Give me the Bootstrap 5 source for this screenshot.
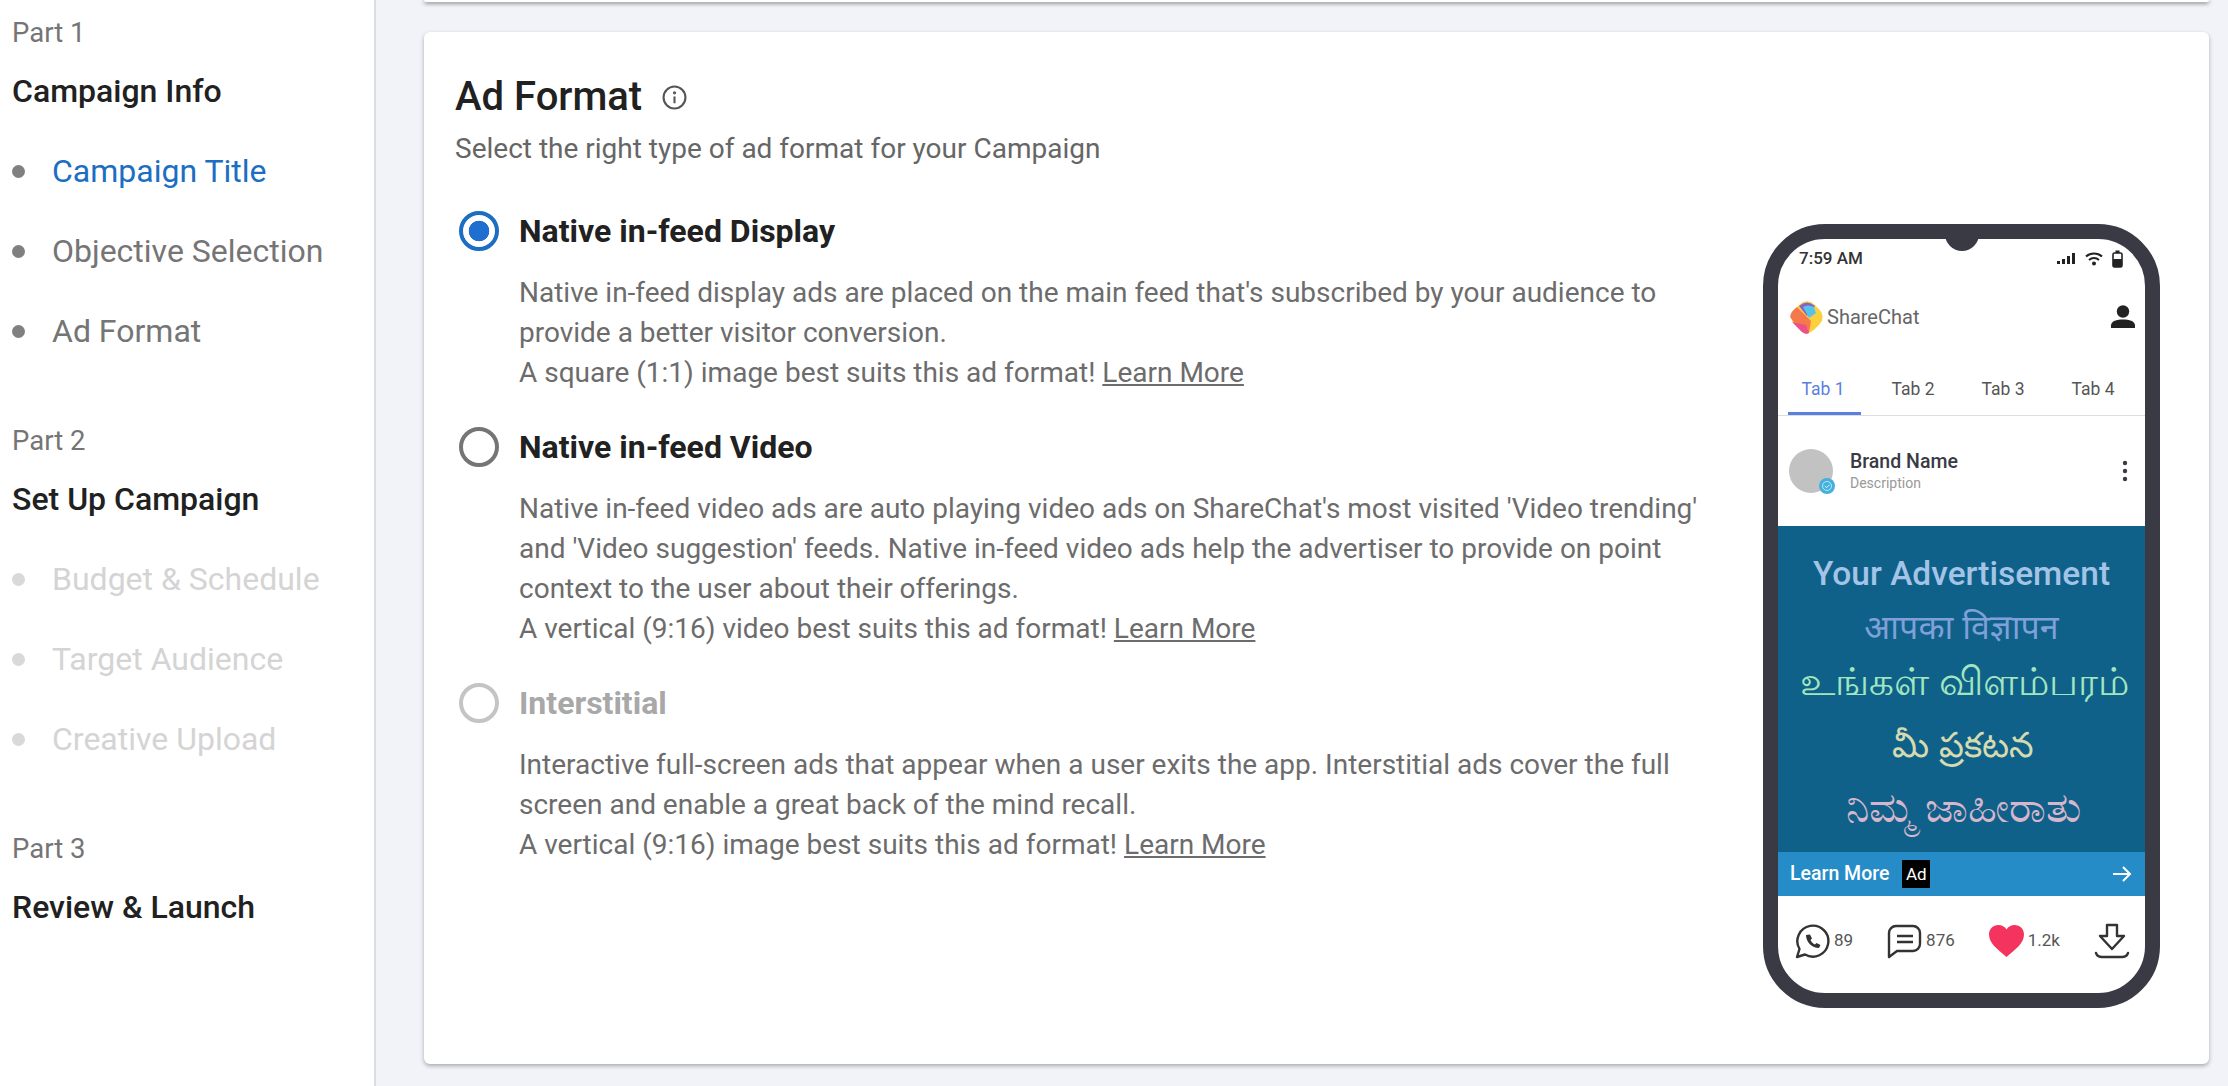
<!DOCTYPE html>
<html lang="en">
<head>
    <meta charset="UTF-8">
    <title>Ad Format</title>
    <link href="https://cdn.jsdelivr.net/npm/bootstrap@5.3.2/dist/css/bootstrap.min.css" rel="stylesheet">
    <style>
        html, body { height: 100%; }
        body { font-family: Roboto, "Liberation Sans", sans-serif; background: #f2f3f8; color: #212121; overflow: hidden; }
        .page-wrap { height: 1086px; }

        /* sidebar */
        .side-nav { width: 376px; flex: none; background: #fff; border-right: 2px solid #dcdde3; padding: 0 12px; }
        .part-label { font-size: 27.5px; line-height: 40px; color: #757575; margin-top: 13px; }
        .part-label.later { margin-top: 70px; }
        .part-title { font-size: 32px; line-height: 40px; font-weight: 500; color: #212121; margin-top: 18px; }
        .step-list { list-style: none; padding: 0; margin: 40px 0 0; }
        .step-list li { font-size: 32px; line-height: 40px; color: #757575; margin-bottom: 40px; display: flex; align-items: center; }
        .step-list li:last-child { margin-bottom: 0; }
        .step-list li::before { content: ""; width: 13px; height: 13px; border-radius: 50%; background: #808080; margin-right: 27px; flex: none; }
        .step-list li.active { color: #1b6ec2; }
        .step-list li.off { color: #d4d4d4; }
        .step-list li.off::before { background: #d9d9d9; }

        /* main */
        .main-area { padding: 0 19px 0 48px; min-width: 0; }
        .prev-card { height: 2px; background: #fff; border-radius: 0 0 6px 6px; box-shadow: 0 1px 4px rgba(0,0,0,.75); }
        .format-card { margin-top: 30px; height: 1032px; border: 0; border-radius: 6px; box-shadow: 0 2px 4px rgba(0,0,0,.3); padding: 0 49px 0 31px; }
        .format-title { font-size: 40px; line-height: 50px; font-weight: 500; color: #212121; margin: 40px 0 0; }
        .format-sub { font-size: 28px; line-height: 40px; color: #666; margin: 7px 0 42px; }
        .info-ico { width: 25px; height: 25px; margin-left: 20px; }
        .format-item { margin-bottom: 34px; }
        .format-item .form-check-input { width: 40px; height: 40px; margin: 0 0 0 4px; border: 4px solid #757575; background-color: #fff; flex: none; }
        .format-item .form-check-input:checked { border-color: #1b6ec2; background-image: radial-gradient(circle, #1f6fd0 10px, #fff 10.6px); background-color: #fff; }
        .format-item .form-check-input:disabled { border-color: #c4c4c4; opacity: 1; }
        .format-name { font-size: 32px; line-height: 40px; font-weight: 700; color: #212121; margin-left: 20px; }
        .format-desc { font-size: 28px; line-height: 40px; color: #6c6c6c; margin: 22px 0 0 64px; width: 1190px; }
        .format-desc a { color: #6c6c6c; }
        .is-off .format-name { color: #a8a8a8; }

        /* phone preview */
        .phone-col { width: 397px; flex: none; margin-top: 192px; }
        .phone-frame { height: 784px; border: 15px solid #3a3a44; border-radius: 62px; background: #fff; position: relative; overflow: hidden; display: flex; flex-direction: column; color: #333; }
        .phone-notch { position: absolute; top: -14px; left: 50%; margin-left: -17px; width: 34px; height: 26px; background: #3a3a44; border-radius: 0 0 17px 17px; }
        .phone-status { height: 40px; padding: 0 22px 0 21px; font-size: 17px; font-weight: 500; }
        .phone-head { height: 76px; padding: 0 9px 0 12px; }
        .brand-word { font-size: 20px; color: #666; margin-left: 3px; }
        .phone-tabs { height: 61px; border-bottom: 1px solid #dcdde0; font-size: 17.5px; color: #555; }
        .phone-tab { width: 90px; text-align: center; position: relative; padding-top: 21px; }
        .phone-tab.current { color: #5b7fe0; }
        .phone-tab.current::after { content: ""; position: absolute; left: 10px; right: 7px; bottom: 0; height: 3px; background: #5b7fe0; }
        .post-head { height: 110px; padding: 0 16px 0 11px; }
        .post-avatar { width: 44px; height: 44px; border-radius: 50%; background: #c2c2c2; position: relative; flex: none; }
        .post-avatar svg { position: absolute; right: -2px; bottom: -1px; }
        .post-names { margin-left: 17px; padding-top: 2px; }
        .post-brand { font-size: 19.5px; font-weight: 500; color: #3a3a44; line-height: 22px; }
        .post-descr { font-size: 14px; color: #999; line-height: 20px; }
        .ad-image { height: 326px; background: #0f6189; text-align: center; padding-top: 26px; }
        .ad-line { white-space: nowrap; font-family: "Noto Sans", Roboto, sans-serif; }
        .ad-en { font-family: Roboto, sans-serif; font-size: 33.5px; font-weight: 500; color: #a3c4e6; height: 44px; line-height: 44px; }
        .ad-hi { font-size: 34px; color: #7fa0d8; height: 60px; line-height: 60px; }
        .ad-ta { font-size: 39px; color: #a2e6bf; height: 48px; line-height: 48px; padding-left: 6px; }
        .ad-te { font-size: 35px; color: #d5dab0; height: 79px; line-height: 79px; padding-left: 3px; }
        .ad-kn { font-size: 41.5px; color: #d6b6cc; height: 47px; line-height: 47px; padding-left: 4px; }
        .learn-bar { height: 44px; background: #258cc8; color: #fff; padding: 0 13px 0 12px; font-size: 19.5px; font-weight: 500; }
        .ad-tag { background: #000; color: #fff; font-weight: 400; font-size: 17px; width: 28px; height: 28px; line-height: 28px; text-align: center; margin-left: 13px; }
        .phone-actions { height: 90px; padding: 0 15px 0 17px; font-size: 17px; color: #555; }
    </style>
</head>
<body>
    <div class="page-wrap d-flex">
        <aside class="side-nav">
            <div class="part-label">Part 1</div>
            <div class="part-title">Campaign Info</div>
            <ul class="step-list">
                <li class="active">Campaign Title</li>
                <li>Objective Selection</li>
                <li>Ad Format</li>
            </ul>
            <div class="part-label later">Part 2</div>
            <div class="part-title">Set Up Campaign</div>
            <ul class="step-list">
                <li class="off">Budget &amp; Schedule</li>
                <li class="off">Target Audience</li>
                <li class="off">Creative Upload</li>
            </ul>
            <div class="part-label later">Part 3</div>
            <div class="part-title">Review &amp; Launch</div>
        </aside>

        <main class="main-area flex-grow-1">
            <div class="prev-card"></div>
            <div class="card format-card flex-row justify-content-between">
                <div>
                    <h1 class="format-title d-flex align-items-center">Ad Format
                        <svg class="info-ico" viewBox="0 0 24 24" fill="none" stroke="#555" stroke-width="2"><circle cx="12" cy="12" r="10.500"/><path d="M12 11v6.500"/><circle cx="12" cy="7.500" r=".6" fill="#555"/></svg>
                    </h1>
                    <div class="format-sub">Select the right type of ad format for your Campaign</div>

                    <div class="format-item">
                        <div class="d-flex align-items-center">
                            <input class="form-check-input" type="radio" name="adFormat" checked>
                            <span class="format-name">Native in-feed Display</span>
                        </div>
                        <div class="format-desc">Native in-feed display ads are placed on the main feed that's subscribed by your audience to provide a better visitor conversion.<br>A square (1:1) image best suits this ad format! <a href="#">Learn More</a></div>
                    </div>
                    <div class="format-item">
                        <div class="d-flex align-items-center">
                            <input class="form-check-input" type="radio" name="adFormat">
                            <span class="format-name">Native in-feed Video</span>
                        </div>
                        <div class="format-desc">Native in-feed video ads are auto playing video ads on ShareChat's most visited 'Video trending' and 'Video suggestion' feeds. Native in-feed video ads help the advertiser to provide on point context to the user about their offerings.<br>A vertical (9:16) video best suits this ad format! <a href="#">Learn More</a></div>
                    </div>
                    <div class="format-item is-off">
                        <div class="d-flex align-items-center">
                            <input class="form-check-input" type="radio" name="adFormat" disabled>
                            <span class="format-name">Interstitial</span>
                        </div>
                        <div class="format-desc">Interactive full-screen ads that appear when a user exits the app. Interstitial ads cover the full screen and enable a great back of the mind recall.<br>A vertical (9:16) image best suits this ad format! <a href="#">Learn More</a></div>
                    </div>
                </div>

                <div class="phone-col">
                    <div class="phone-frame">
                        <div class="phone-notch"></div>
                        <div class="phone-status d-flex align-items-center justify-content-between">
                            <span>7:59 AM</span>
                            <svg width="66" height="18" viewBox="0 0 66 18">
                                <g fill="#222"><rect x="0" y="11" width="3" height="3"/><rect x="5" y="9" width="3" height="5"/><rect x="10" y="6" width="3" height="8"/><rect x="15" y="3" width="3" height="11"/></g>
                                <g fill="none" stroke="#222" stroke-width="2"><path d="M29 6.500a12 12 0 0 1 16 0"/><path d="M32 10a7.500 7.500 0 0 1 10 0"/></g><circle cx="37" cy="13.500" r="2" fill="#222"/>
                                <rect x="56" y="3" width="9" height="14" rx="1.500" fill="#fff" stroke="#222" stroke-width="1.600"/><rect x="56" y="9" width="9" height="8" rx="1" fill="#222"/><rect x="58.500" y="0.500" width="4" height="2.500" fill="#222"/>
                            </svg>
                        </div>
                        <div class="phone-head d-flex align-items-center justify-content-between">
                            <div class="d-flex align-items-center">
                                <svg width="34" height="34" viewBox="0 0 34 34">
                                    <rect x="3" y="3" width="28" height="28" rx="10" transform="rotate(45 17 17)" fill="#fbd03c"/>
                                    <path d="M9 6 Q17 -1 25 6 L17 16Z" fill="#8a60c8"/>
                                    <path d="M13 7 Q18 4 24 7 L26 13 L19 18Z" fill="#55c4ea"/>
                                    <path d="M0 17 Q1 11 7 7 L21 21 L19 33 Q15 35 11 31Z" fill="#f6794c"/>
                                    <path d="M2 22 L16 25 L19 33 Q15 35 11 31Z" fill="#ee4f88"/>
                                </svg>
                                <span class="brand-word">ShareChat</span>
                            </div>
                            <svg width="26" height="26" viewBox="0 0 26 26" fill="#222"><circle cx="13" cy="7.500" r="6.200"/><path d="M1 24v-2.500C1 17 7 15.500 13 15.500s12 1.500 12 6V24Z"/></svg>
                        </div>
                        <div class="phone-tabs d-flex">
                            <div class="phone-tab current">Tab 1</div>
                            <div class="phone-tab">Tab 2</div>
                            <div class="phone-tab">Tab 3</div>
                            <div class="phone-tab">Tab 4</div>
                        </div>
                        <div class="post-head d-flex align-items-center">
                            <div class="post-avatar">
                                <svg width="16" height="16" viewBox="0 0 16 16"><circle cx="8" cy="8" r="8" fill="#44b0e0"/><circle cx="8" cy="8" r="4.500" fill="none" stroke="#bfe6f6" stroke-width="1"/><path d="M5.800 8l1.700 1.700 3-3" fill="none" stroke="#e8f7fd" stroke-width="1"/></svg>
                            </div>
                            <div class="post-names flex-grow-1">
                                <div class="post-brand">Brand Name</div>
                                <div class="post-descr">Description</div>
                            </div>
                            <svg width="8" height="22" viewBox="0 0 8 22" fill="#3a3a44"><circle cx="4" cy="3" r="2.200"/><circle cx="4" cy="11" r="2.200"/><circle cx="4" cy="19" r="2.200"/></svg>
                        </div>
                        <div class="ad-image">
                            <div class="ad-line ad-en">Your Advertisement</div>
                            <div class="ad-line ad-hi">आपका विज्ञापन</div>
                            <div class="ad-line ad-ta">உங்கள் விளம்பரம்</div>
                            <div class="ad-line ad-te">మీ ప్రకటన</div>
                            <div class="ad-line ad-kn">ನಿಮ್ಮ ಜಾಹೀರಾತು</div>
                        </div>
                        <div class="learn-bar d-flex align-items-center">
                            <span>Learn More</span>
                            <span class="ad-tag">Ad</span>
                            <svg class="ms-auto" width="20" height="18" viewBox="0 0 20 18" fill="none" stroke="#fff" stroke-width="2"><path d="M1 9h17M11 2l7 7-7 7"/></svg>
                        </div>
                        <div class="phone-actions d-flex align-items-center justify-content-between">
                            <div class="d-flex align-items-center gap-1">
                                <svg width="35" height="35" viewBox="0 0 35 35" fill="none" stroke="#333" stroke-width="2.400"><path d="M2 33l2.500-8A15.500 15.500 0 1 1 10 30.500Z" stroke-linejoin="round"/><path d="M11 11c0 7 6 13 13 13l1.500-3-4-2-1.500 1.500c-2-1-3.500-2.500-4.500-4.500L17 14.500l-2-4Z" fill="#333" stroke="none"/></svg>
                                <span>89</span>
                            </div>
                            <div class="d-flex align-items-center gap-1">
                                <svg width="35" height="35" viewBox="0 0 35 35" fill="none" stroke="#333" stroke-width="2.400"><path d="M2 33V9a7 7 0 0 1 7-7h17a7 7 0 0 1 7 7v11a7 7 0 0 1-7 7H10Z" stroke-linejoin="round"/><path d="M10 12h16M10 18h16"/></svg>
                                <span>876</span>
                            </div>
                            <div class="d-flex align-items-center gap-1">
                                <svg width="35" height="32" viewBox="0 0 35 32" fill="#f5335f"><path d="M17.500 32C8 24 0 18 0 9.500 0 4 4 0 9.500 0c3.300 0 6.300 1.700 8 4.500C19.200 1.700 22.200 0 25.500 0 31 0 35 4 35 9.500 35 18 27 24 17.500 32Z"/></svg>
                                <span>1.2k</span>
                            </div>
                            <svg width="36" height="36" viewBox="0 0 36 36" fill="none" stroke="#333" stroke-width="2.400" stroke-linejoin="round" stroke-linecap="round"><path d="M13 2h10v11h7L18 26 6 13h7Z"/><path d="M2 30c1 3 3 4 6 4h20c3 0 5-1 6-4"/></svg>
                        </div>
                    </div>
                </div>
            </div>
        </main>
    </div>
</body>
</html>
